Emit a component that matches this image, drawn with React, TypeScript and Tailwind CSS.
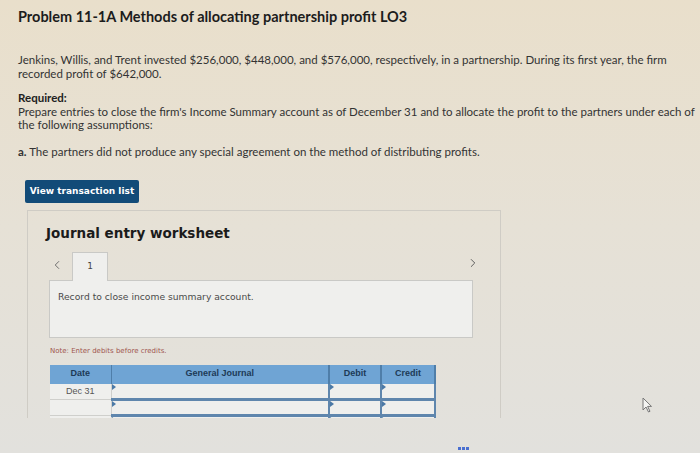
import { ChevronLeft, ChevronRight } from 'lucide-react'

function Cell({ children, className = '' }: { children?: React.ReactNode; className?: string }) {
  return (
    <td className={`relative border-b-[3px] border-r-2 border-[#5f86ad] bg-[#efefed] p-0 ${className}`}>
      <span className="absolute left-0 top-0 h-0 w-0 border-y-[3px] border-l-[4px] border-y-transparent border-l-[#4b79a6]" />
      {children}
    </td>
  )
}

export default function App() {
  const rows = ['Dec 31', '', '']

  return (
    <div className="relative h-[453px] w-[700px] overflow-hidden bg-gradient-to-b from-[#e9dfcb] via-[#e6e1d6] to-[#e2e1dd] font-['Lato','Open_Sans',sans-serif] text-[#333]">
      <div className="whitespace-nowrap px-[18px] pt-[8px]">
        <h1 className="text-[14.5px] font-bold leading-[18px] text-[#1c1c1c]">
          Problem 11-1A Methods of allocating partnership profit LO3
        </h1>

        <p className="mt-[27px] text-[11.5px] leading-[13.5px]">
          Jenkins, Willis, and Trent invested $256,000, $448,000, and $576,000, respectively, in a partnership. During its first year, the firm
          <br />
          recorded profit of $642,000.
        </p>

        <p className="mt-[11px] text-[11.5px] font-bold leading-[13.5px] text-[#222]">Required:</p>
        <p className="text-[11.5px] leading-[13.5px]">
          Prepare entries to close the firm's Income Summary account as of December 31 and to allocate the profit to the partners under each of
          <br />
          the following assumptions:
        </p>

        <p className="mt-[13px] text-[11.5px] leading-[13.5px]">
          <span className="font-bold">a.</span> The partners did not produce any special agreement on the method of distributing profits.
        </p>
      </div>

      <div className="ml-[25px] mt-[22px] flex h-[23px] w-[114px] items-center justify-center rounded-[2px] bg-[#124b78] font-['DejaVu_Sans',sans-serif] text-[9px] font-bold text-white">
        View transaction list
      </div>

      <div className="ml-[27px] mt-[7px] h-[208px] w-[474px] overflow-hidden border-l border-r border-t border-[#cfccc5] font-['DejaVu_Sans',sans-serif]">
        <h2 className="ml-[18px] mt-[13px] text-[13.5px] font-bold leading-[18px] text-[#1b1b1b]">Journal entry worksheet</h2>

        <div className="mt-[10px] flex items-end pl-[22px] pr-[20px]">
          <ChevronLeft size={14} strokeWidth={1.6} className="mb-[8px] text-[#666]" />
          <div className="z-10 -mb-px ml-[8px] flex h-[29px] w-[36px] items-center justify-center border border-b-0 border-[#c9c9c6] bg-[#efefed] text-[9px] text-[#444]">
            1
          </div>
          <div className="flex-1" />
          <ChevronRight size={14} strokeWidth={1.6} className="mb-[10px] text-[#555]" />
        </div>

        <div className="ml-[21px] h-[58px] w-[424px] border border-[#c9c9c6] bg-[#efefed] px-[8px] pt-[9px] text-[9.2px] text-[#4a4a4a]">
          Record to close income summary account.
        </div>

        <p className="ml-[22px] mt-[8px] text-[7px] text-[#a0564f]">Note: Enter debits before credits.</p>

        <table className="ml-[22px] mt-[8px] w-[385px] table-fixed border-collapse font-['Liberation_Sans',sans-serif] text-[9px]">
          <colgroup>
            <col className="w-[61px]" />
            <col className="w-[218px]" />
            <col className="w-[52px]" />
            <col className="w-[54px]" />
          </colgroup>
          <thead>
            <tr className="h-[19px] bg-[#6fa4d4] font-bold text-[#1d3a57]">
              <th className="border-r border-[#4f7ea9] font-bold">Date</th>
              <th className="border-r-2 border-[#4f7ea9] font-bold">General Journal</th>
              <th className="border-r-2 border-[#4f7ea9] font-bold">Debit</th>
              <th className="border-r-2 border-[#4f7ea9] font-bold">Credit</th>
            </tr>
          </thead>
          <tbody>
            {rows.map((d, i) => (
              <tr key={i} className="h-[16px]">
                <td className="border-b border-r border-[#cfcfcc] bg-[#efefed] p-0 text-center text-[9px] text-[#555]">{d}</td>
                <Cell />
                <Cell />
                <Cell />
              </tr>
            ))}
          </tbody>
        </table>
      </div>

      <svg className="absolute left-[642px] top-[397px]" width="12" height="16" viewBox="0 0 12 16">
        <path d="M1 1 L1 13 L4 10 L6.5 15 L8 14.3 L5.6 9.4 L9.5 9.4 Z" fill="#f4f4f2" stroke="#777" strokeWidth="1" />
      </svg>

      <div className="absolute left-[458px] top-[447px] flex gap-[1px]">
        <span className="h-[3px] w-[3px] bg-[#4a6fd0]" />
        <span className="h-[3px] w-[3px] bg-[#4a6fd0]" />
        <span className="h-[3px] w-[3px] bg-[#4a6fd0]" />
      </div>
    </div>
  )
}
